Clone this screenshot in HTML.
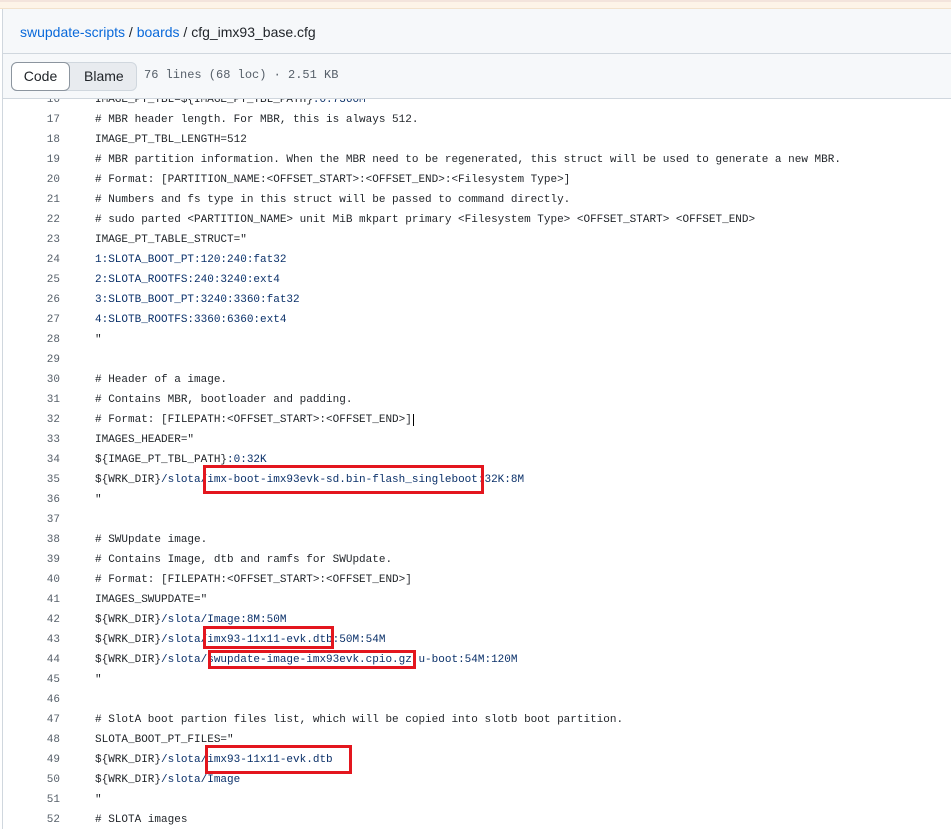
<!DOCTYPE html>
<html><head><meta charset="utf-8"><style>
*{margin:0;padding:0;box-sizing:border-box}
body{width:951px;height:829px;overflow:hidden;background:#fff;font-family:"Liberation Sans",sans-serif;position:relative}
.top1{position:absolute;left:0;top:0;width:951px;height:2px;background:#f3e4dc}
.top2{position:absolute;left:0;top:2px;width:951px;height:7px;background:#fdf4e8;border-bottom:1px solid #f2e2cc}
.lb{position:absolute;left:2px;top:9px;width:1px;height:820px;background:#d0d7de}
.hdr{position:absolute;left:3px;top:9px;width:948px;height:45px;background:#f6f8fa;border-bottom:1px solid #d0d7de}
.crumb{position:absolute;left:17px;top:15px;font-size:14px;color:#1f2328}
.crumb a{color:#0969da;text-decoration:none}
.tb{position:absolute;left:3px;top:54px;width:948px;height:45px;background:#f6f8fa;border-bottom:1px solid #d0d7de}
.seg{position:absolute;left:8px;top:8px;width:126px;height:29px;background:#e8ebef;border:1px solid #d0d7de;border-radius:6px}
.code-b{position:absolute;left:-1px;top:-1px;width:59px;height:29px;background:#fff;border:1px solid #8c959f;border-radius:6px;font-size:14px;text-align:center;line-height:27px;color:#1f2328}
.blame{position:absolute;left:72px;top:0;font-size:14px;line-height:27px;color:#1f2328}
.meta{position:absolute;left:141px;top:14px;font:12px "Liberation Mono",monospace;color:#57606a}
.code{position:absolute;left:3px;top:99px;width:948px;height:730px;overflow:hidden}
.inner{position:absolute;left:0;top:-9px}
.l{height:20px;line-height:20px;font:11px/20px "Liberation Mono",monospace;white-space:pre;color:#1f2328;position:relative}
.n{position:absolute;left:0;width:57px;text-align:right;color:#57606a}
.t{position:absolute;left:92px}
.b{color:#0a3069}
.box{position:absolute;border:3px solid #e3161e}
</style></head><body>
<div class="top1"></div><div class="top2"></div>
<div class="hdr"><div class="crumb"><a>swupdate-scripts</a> / <a>boards</a> / cfg_imx93_base.cfg</div></div>
<div class="tb"><div class="seg"><div class="code-b">Code</div><div class="blame">Blame</div></div><div class="meta">76 lines (68 loc) · 2.51 KB</div></div>
<div class="lb"></div>
<div class="code"><div class="inner">
<div class="l"><span class="n">16</span><span class="t">IMAGE_PT_TBL=${IMAGE_PT_TBL_PATH}<span class="b">:0:7360M</span></span></div>
<div class="l"><span class="n">17</span><span class="t"># MBR header length. For MBR, this is always 512.</span></div>
<div class="l"><span class="n">18</span><span class="t">IMAGE_PT_TBL_LENGTH=512</span></div>
<div class="l"><span class="n">19</span><span class="t"># MBR partition information. When the MBR need to be regenerated, this struct will be used to generate a new MBR.</span></div>
<div class="l"><span class="n">20</span><span class="t"># Format: [PARTITION_NAME:&lt;OFFSET_START&gt;:&lt;OFFSET_END&gt;:&lt;Filesystem Type&gt;]</span></div>
<div class="l"><span class="n">21</span><span class="t"># Numbers and fs type in this struct will be passed to command directly.</span></div>
<div class="l"><span class="n">22</span><span class="t"># sudo parted &lt;PARTITION_NAME&gt; unit MiB mkpart primary &lt;Filesystem Type&gt; &lt;OFFSET_START&gt; &lt;OFFSET_END&gt;</span></div>
<div class="l"><span class="n">23</span><span class="t">IMAGE_PT_TABLE_STRUCT="</span></div>
<div class="l"><span class="n">24</span><span class="t b">1:SLOTA_BOOT_PT:120:240:fat32</span></div>
<div class="l"><span class="n">25</span><span class="t b">2:SLOTA_ROOTFS:240:3240:ext4</span></div>
<div class="l"><span class="n">26</span><span class="t b">3:SLOTB_BOOT_PT:3240:3360:fat32</span></div>
<div class="l"><span class="n">27</span><span class="t b">4:SLOTB_ROOTFS:3360:6360:ext4</span></div>
<div class="l"><span class="n">28</span><span class="t">"</span></div>
<div class="l"><span class="n">29</span><span class="t"></span></div>
<div class="l"><span class="n">30</span><span class="t"># Header of a image.</span></div>
<div class="l"><span class="n">31</span><span class="t"># Contains MBR, bootloader and padding.</span></div>
<div class="l"><span class="n">32</span><span class="t"># Format: [FILEPATH:&lt;OFFSET_START&gt;:&lt;OFFSET_END&gt;]<span style="border-left:1px solid #000;margin-left:1px"> </span></span></div>
<div class="l"><span class="n">33</span><span class="t">IMAGES_HEADER="</span></div>
<div class="l"><span class="n">34</span><span class="t">${IMAGE_PT_TBL_PATH}<span class="b">:0:32K</span></span></div>
<div class="l"><span class="n">35</span><span class="t">${WRK_DIR}<span class="b">/slota/imx-boot-imx93evk-sd.bin-flash_singleboot:32K:8M</span></span></div>
<div class="l"><span class="n">36</span><span class="t">"</span></div>
<div class="l"><span class="n">37</span><span class="t"></span></div>
<div class="l"><span class="n">38</span><span class="t"># SWUpdate image.</span></div>
<div class="l"><span class="n">39</span><span class="t"># Contains Image, dtb and ramfs for SWUpdate.</span></div>
<div class="l"><span class="n">40</span><span class="t"># Format: [FILEPATH:&lt;OFFSET_START&gt;:&lt;OFFSET_END&gt;]</span></div>
<div class="l"><span class="n">41</span><span class="t">IMAGES_SWUPDATE="</span></div>
<div class="l"><span class="n">42</span><span class="t">${WRK_DIR}<span class="b">/slota/Image:8M:50M</span></span></div>
<div class="l"><span class="n">43</span><span class="t">${WRK_DIR}<span class="b">/slota/imx93-11x11-evk.dtb:50M:54M</span></span></div>
<div class="l"><span class="n">44</span><span class="t">${WRK_DIR}<span class="b">/slota/swupdate-image-imx93evk.cpio.gz.u-boot:54M:120M</span></span></div>
<div class="l"><span class="n">45</span><span class="t">"</span></div>
<div class="l"><span class="n">46</span><span class="t"></span></div>
<div class="l"><span class="n">47</span><span class="t"># SlotA boot partion files list, which will be copied into slotb boot partition.</span></div>
<div class="l"><span class="n">48</span><span class="t">SLOTA_BOOT_PT_FILES="</span></div>
<div class="l"><span class="n">49</span><span class="t">${WRK_DIR}<span class="b">/slota/imx93-11x11-evk.dtb</span></span></div>
<div class="l"><span class="n">50</span><span class="t">${WRK_DIR}<span class="b">/slota/Image</span></span></div>
<div class="l"><span class="n">51</span><span class="t">"</span></div>
<div class="l"><span class="n">52</span><span class="t"># SLOTA images</span></div>
</div></div>
<div class="box" style="left:203px;top:465px;width:281px;height:29px"></div>
<div class="box" style="left:203px;top:626px;width:131px;height:23px"></div>
<div class="box" style="left:208px;top:650px;width:208px;height:19px"></div>
<div class="box" style="left:205px;top:745px;width:147px;height:29px"></div>
</body></html>
